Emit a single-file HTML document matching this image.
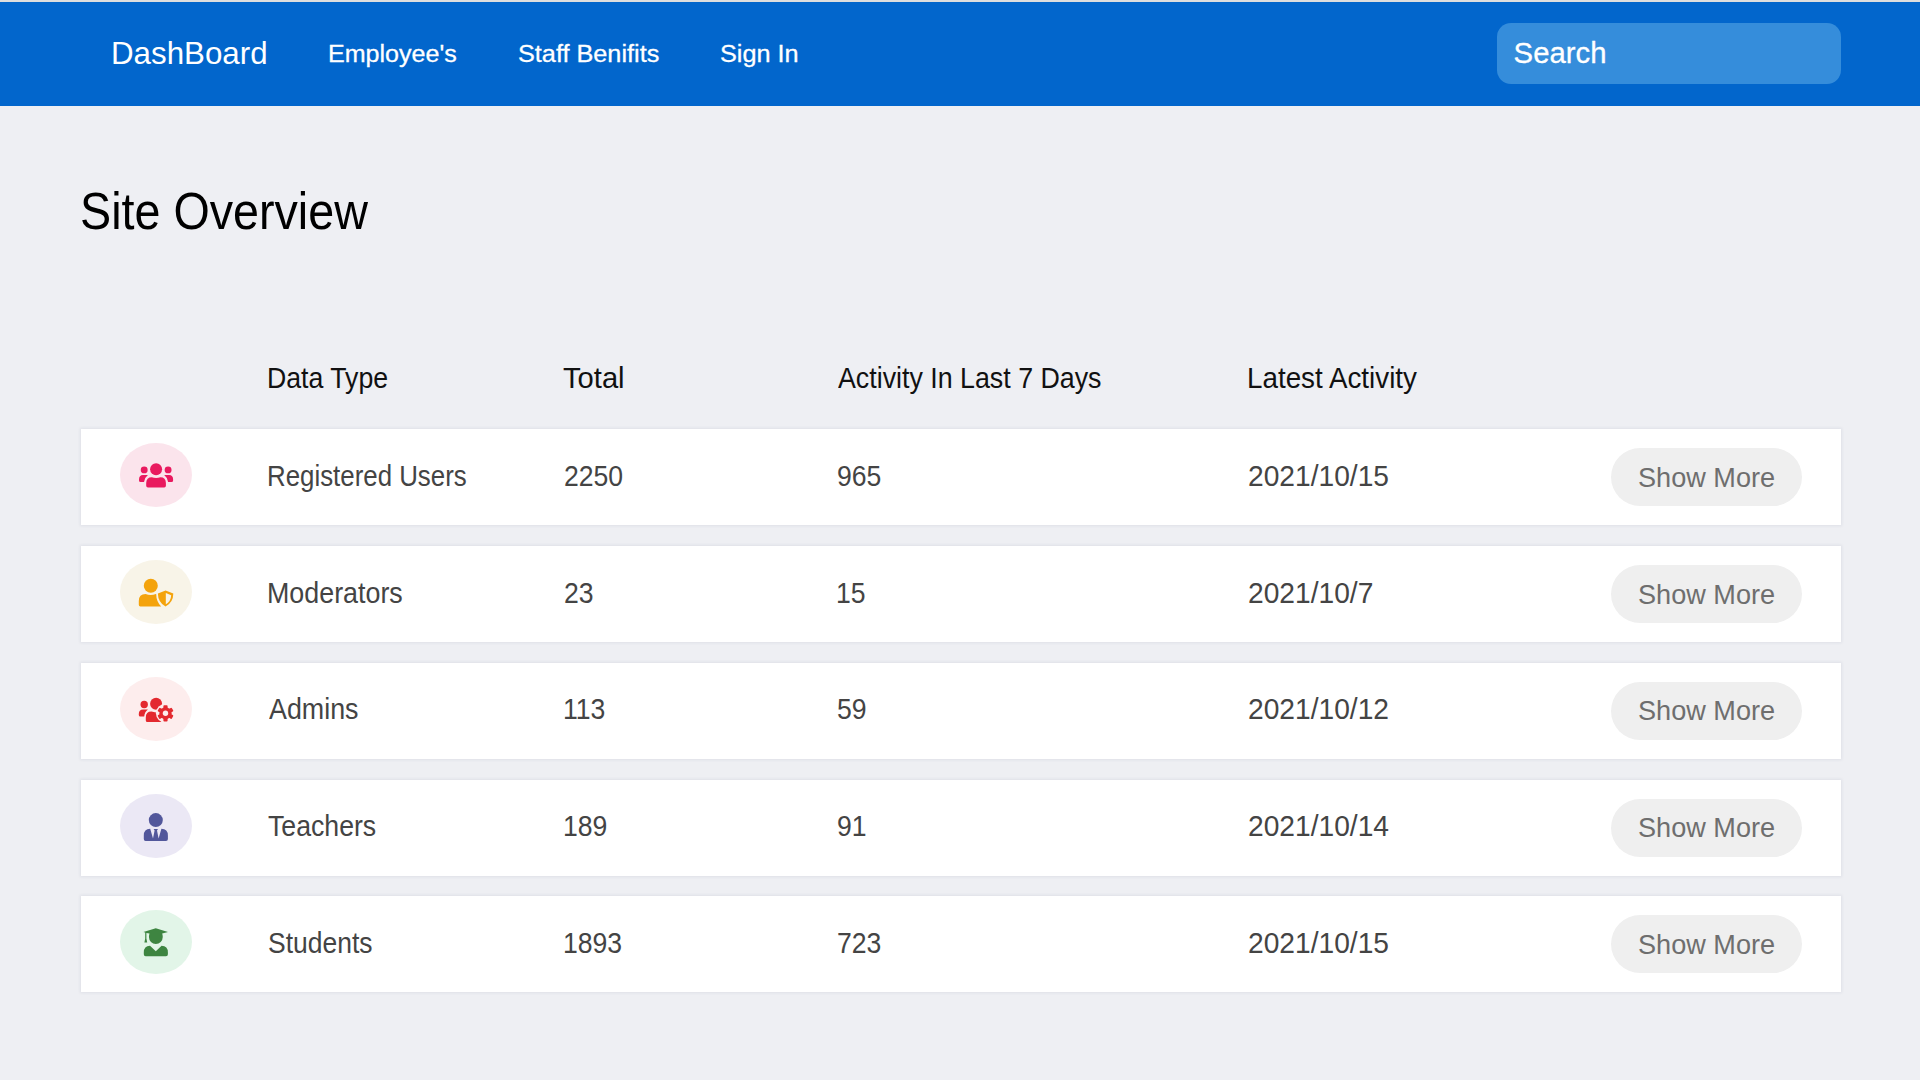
<!DOCTYPE html>
<html>
<head>
<meta charset="utf-8">
<style>
html,body{margin:0;padding:0;}
body{width:1920px;height:1080px;overflow:hidden;background:#eeeff3;font-family:"Liberation Sans",sans-serif;position:relative;}
.t{position:absolute;white-space:nowrap;line-height:1;transform-origin:0 0;}
.nv{-webkit-text-stroke:0.3px #fff;}
#topline{position:absolute;left:0;top:0;width:1920px;height:2px;background:#dedede;}
#nav{position:absolute;left:0;top:2px;width:1920px;height:104px;background:#0266cc;}
#search{position:absolute;left:1497px;top:23.2px;width:344px;height:61.2px;border-radius:14px;background:#358ddb;}
.row{position:absolute;left:81px;width:1760px;height:96px;background:#fff;box-shadow:0 0 3px 1px rgba(30,40,90,0.07);}
.ic{position:absolute;left:39px;top:14px;width:72px;height:64px;border-radius:50%;}
.ic svg{position:absolute;left:0;top:0;}
.btn{position:absolute;left:1530px;top:19px;width:191px;height:58px;border-radius:29px;background:#efefef;}
</style>
</head>
<body>
<div id="topline"></div>
<div id="nav"></div>
<div id="search"></div>
<div class="row" style="top:429.0px;"><div class="ic" style="background:#fbe4ec;"><svg width="72" height="64" viewBox="0 0 72 64">
<circle cx="36.1" cy="26.2" r="6" fill="#e91a5f"/>
<circle cx="24.2" cy="26.9" r="3.45" fill="#e91a5f"/>
<circle cx="48.1" cy="26.9" r="3.45" fill="#e91a5f"/>
<path d="M19 36.5 Q19 32 23 32 L27.9 32 Q24.6 34.5 24 39 L20.6 39 Q19 39 19 37.4 Z" fill="#e91a5f"/>
<path d="M53.1 36.5 Q53.1 32 49.1 32 L44.2 32 Q47.5 34.5 48.1 39 L51.5 39 Q53.1 39 53.1 37.4 Z" fill="#e91a5f"/>
<path d="M26.2 42.8 L26.2 40 Q26.4 34.2 31.8 34.2 Q33.8 35 36.1 35 Q38.4 35 40.4 34.2 Q45.8 34.2 45.9 40 L45.9 42.8 Q45.9 44.6 44.2 44.6 L28 44.6 Q26.2 44.6 26.2 42.8 Z" fill="#e91a5f"/></svg></div><div class="btn"></div></div><div class="row" style="top:545.75px;"><div class="ic" style="background:#f8f4e8;"><svg width="72" height="64" viewBox="0 0 72 64">
<circle cx="30.8" cy="25.8" r="7" fill="#f4a30c"/>
<path d="M18.8 44.8 L18.8 41 Q18.8 34 25.6 34 Q28 35 30.8 35 Q33.6 35 35.8 34 L36.2 34 Q36.2 41.5 41.2 46.5 L20.4 46.5 Q18.8 46.5 18.8 44.8 Z" fill="#f4a30c"/>
<path d="M45.6 30.6 L53.3 33.6 Q53.3 42.5 45.6 46.5 Q37.9 42.5 37.9 33.6 Z" fill="#f4a30c"/>
<path d="M45.8 33 L51.2 35.2 Q50.9 41.4 45.8 44.2 Z" fill="#f8f4e8"/></svg></div><div class="btn"></div></div><div class="row" style="top:662.5px;"><div class="ic" style="background:#fdeded;"><svg width="72" height="64" viewBox="0 0 72 64">
<circle cx="36.1" cy="26.7" r="6" fill="#e3292f"/>
<circle cx="24.2" cy="27.5" r="3.7" fill="#e3292f"/>
<path d="M18.8 37 Q18.8 32.5 23 32.5 L27.9 32.5 Q24.5 35 24.2 39.5 L20.3 39.5 Q18.8 39.5 18.8 38 Z" fill="#e3292f"/>
<path d="M25.8 43.4 L25.8 40.4 Q25.8 34.6 31.5 34.6 Q33.5 35.4 36.1 35.4 Q38 35.4 40 34.8 L41.5 34.8 L41.5 45 L27.4 45 Q25.8 45 25.8 43.4 Z" fill="#e3292f"/>
<circle cx="45.5" cy="36.3" r="9.6" fill="#fdeded"/>
<rect x="43.40" y="28.20" width="4.2" height="4.5" rx="0.9" fill="#e3292f" transform="rotate(0 45.5 36.3)"/><rect x="43.40" y="28.20" width="4.2" height="4.5" rx="0.9" fill="#e3292f" transform="rotate(60 45.5 36.3)"/><rect x="43.40" y="28.20" width="4.2" height="4.5" rx="0.9" fill="#e3292f" transform="rotate(120 45.5 36.3)"/><rect x="43.40" y="28.20" width="4.2" height="4.5" rx="0.9" fill="#e3292f" transform="rotate(180 45.5 36.3)"/><rect x="43.40" y="28.20" width="4.2" height="4.5" rx="0.9" fill="#e3292f" transform="rotate(240 45.5 36.3)"/><rect x="43.40" y="28.20" width="4.2" height="4.5" rx="0.9" fill="#e3292f" transform="rotate(300 45.5 36.3)"/>
<circle cx="45.5" cy="36.3" r="6.1" fill="#e3292f"/>
<circle cx="45.5" cy="36.3" r="2.7" fill="#fdeded"/></svg></div><div class="btn"></div></div><div class="row" style="top:779.6px;"><div class="ic" style="background:#ebe8f5;"><svg width="72" height="64" viewBox="0 0 72 64">
<circle cx="35.8" cy="26.1" r="7" fill="#52579b"/>
<path d="M23.8 45 L23.8 41.5 Q23.8 35 30.2 34.8 L33 44.6 L34.6 36.6 L33.6 35 L38 35 L37 36.6 L38.6 44.6 L41.4 34.8 Q47.9 35 47.9 41.5 L47.9 45 Q47.9 46.9 46 46.9 L25.6 46.9 Q23.8 46.9 23.8 45 Z" fill="#52579b"/></svg></div><div class="btn"></div></div><div class="row" style="top:896.0px;"><div class="ic" style="background:#e2f5e8;"><svg width="72" height="64" viewBox="0 0 72 64">
<path d="M23.4 22 L35.8 18.2 L48 22 L42.2 23.6 Q42.75 25.3 42.75 27.1 A6.9 6.9 0 0 1 28.95 27.1 Q28.95 25.3 29.5 23.6 L26.4 22.9 L26.4 28.5 L27.2 32.4 L24.4 32.4 L25.2 28.5 L25.2 22.5 Z" fill="#3e8541"/>
<path d="M23.8 44.2 L23.8 42.5 Q23.8 36 30 35.8 L35.8 41.3 L41.6 35.8 Q47.9 36 47.9 42.5 L47.9 44.2 Q47.9 46.2 46 46.2 L25.7 46.2 Q23.8 46.2 23.8 44.2 Z" fill="#3e8541"/></svg></div><div class="btn"></div></div>
<div class="t" style="left:111.12px;top:38.00px;font-size:31.5px;color:#ffffff;transform:scaleX(0.9935);">DashBoard</div>
<div class="t nv" style="left:328.38px;top:42.00px;font-size:24.8px;color:#ffffff;transform:scaleX(1.0104);">Employee's</div>
<div class="t nv" style="left:518.18px;top:42.00px;font-size:24.8px;color:#ffffff;transform:scaleX(1.0182);">Staff Benifits</div>
<div class="t nv" style="left:720.18px;top:42.00px;font-size:24.8px;color:#ffffff;transform:scaleX(1.0173);">Sign In</div>
<div class="t nv" style="left:1513.60px;top:38.10px;font-size:29.3px;color:#ffffff;">Search</div>
<div class="t" style="left:80.08px;top:186.40px;font-size:51.5px;color:#000000;transform:scaleX(0.9063);">Site Overview</div>
<div class="t" style="left:267.31px;top:363.10px;font-size:29.8px;color:#111111;transform:scaleX(0.8955);">Data Type</div>
<div class="t" style="left:562.52px;top:363.10px;font-size:29.8px;color:#111111;transform:scaleX(0.9783);">Total</div>
<div class="t" style="left:837.80px;top:363.10px;font-size:29.8px;color:#111111;transform:scaleX(0.8990);">Activity In Last 7 Days</div>
<div class="t" style="left:1246.93px;top:363.10px;font-size:29.8px;color:#111111;transform:scaleX(0.9328);">Latest Activity</div>
<div class="t" style="left:266.99px;top:461.80px;font-size:28.6px;color:#444444;transform:scaleX(0.9041);">Registered Users</div>
<div class="t" style="left:563.87px;top:461.80px;font-size:28.6px;color:#444444;transform:scaleX(0.9300);">2250</div>
<div class="t" style="left:836.87px;top:461.80px;font-size:28.6px;color:#444444;transform:scaleX(0.9300);">965</div>
<div class="t" style="left:1247.77px;top:461.80px;font-size:28.6px;color:#444444;transform:scaleX(0.9850);">2021/10/15</div>
<div class="t" style="left:1638.13px;top:463.80px;font-size:27.5px;color:#6e6e6e;transform:scaleX(0.9853);">Show More</div>
<div class="t" style="left:266.92px;top:578.55px;font-size:28.6px;color:#444444;transform:scaleX(0.9387);">Moderators</div>
<div class="t" style="left:563.87px;top:578.55px;font-size:28.6px;color:#444444;transform:scaleX(0.9300);">23</div>
<div class="t" style="left:835.94px;top:578.55px;font-size:28.6px;color:#444444;transform:scaleX(0.9300);">15</div>
<div class="t" style="left:1247.77px;top:578.55px;font-size:28.6px;color:#444444;transform:scaleX(0.9850);">2021/10/7</div>
<div class="t" style="left:1638.13px;top:580.55px;font-size:27.5px;color:#6e6e6e;transform:scaleX(0.9853);">Show More</div>
<div class="t" style="left:268.80px;top:695.30px;font-size:28.6px;color:#444444;transform:scaleX(0.9383);">Admins</div>
<div class="t" style="left:562.94px;top:695.30px;font-size:28.6px;color:#444444;transform:scaleX(0.9300);">113</div>
<div class="t" style="left:836.87px;top:695.30px;font-size:28.6px;color:#444444;transform:scaleX(0.9300);">59</div>
<div class="t" style="left:1247.77px;top:695.30px;font-size:28.6px;color:#444444;transform:scaleX(0.9850);">2021/10/12</div>
<div class="t" style="left:1638.13px;top:697.30px;font-size:27.5px;color:#6e6e6e;transform:scaleX(0.9853);">Show More</div>
<div class="t" style="left:267.87px;top:812.40px;font-size:28.6px;color:#444444;transform:scaleX(0.9325);">Teachers</div>
<div class="t" style="left:562.94px;top:812.40px;font-size:28.6px;color:#444444;transform:scaleX(0.9300);">189</div>
<div class="t" style="left:836.87px;top:812.40px;font-size:28.6px;color:#444444;transform:scaleX(0.9300);">91</div>
<div class="t" style="left:1247.77px;top:812.40px;font-size:28.6px;color:#444444;transform:scaleX(0.9850);">2021/10/14</div>
<div class="t" style="left:1638.13px;top:814.40px;font-size:27.5px;color:#6e6e6e;transform:scaleX(0.9853);">Show More</div>
<div class="t" style="left:267.87px;top:928.80px;font-size:28.6px;color:#444444;transform:scaleX(0.9261);">Students</div>
<div class="t" style="left:562.94px;top:928.80px;font-size:28.6px;color:#444444;transform:scaleX(0.9300);">1893</div>
<div class="t" style="left:836.87px;top:928.80px;font-size:28.6px;color:#444444;transform:scaleX(0.9300);">723</div>
<div class="t" style="left:1247.77px;top:928.80px;font-size:28.6px;color:#444444;transform:scaleX(0.9850);">2021/10/15</div>
<div class="t" style="left:1638.13px;top:930.80px;font-size:27.5px;color:#6e6e6e;transform:scaleX(0.9853);">Show More</div>
</body>
</html>
